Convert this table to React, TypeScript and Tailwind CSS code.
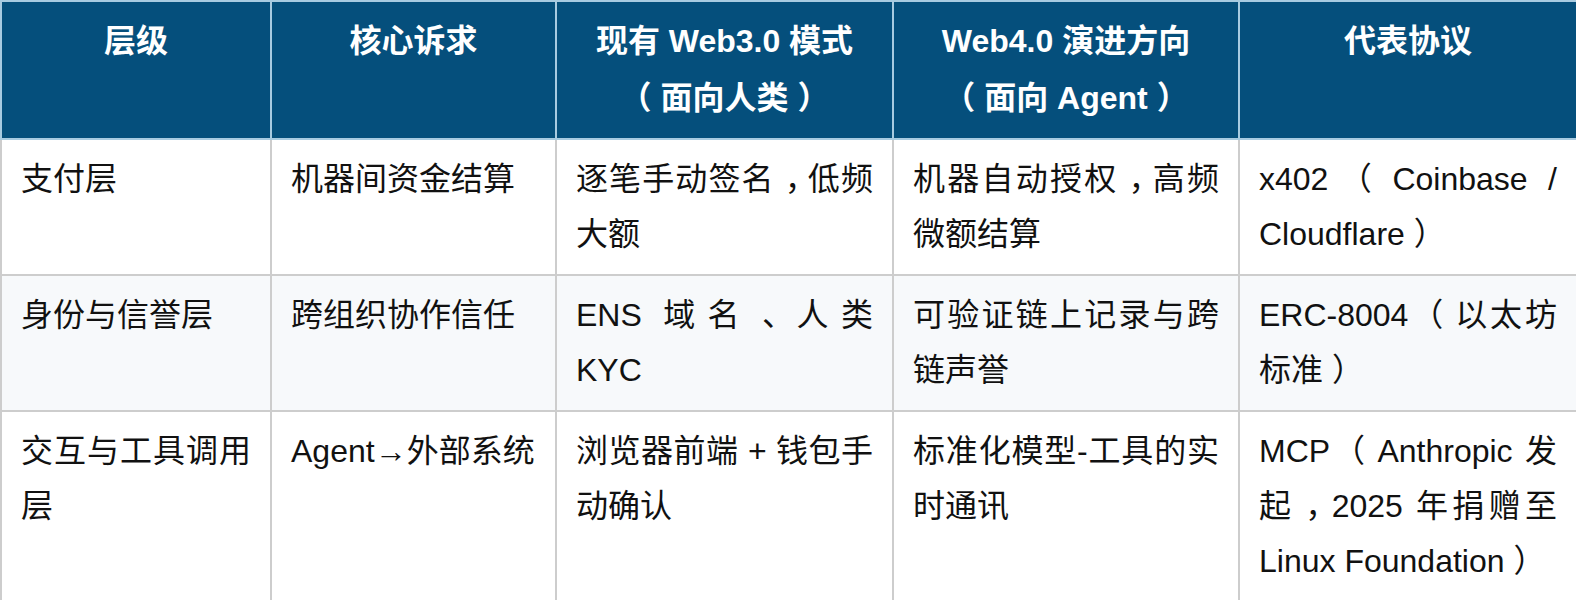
const headers = [
  ["层级"],
  ["核心诉求"],
  ["现有 Web3.0 模式", "（面向人类）"],
  ["Web4.0 演进方向", "（面向 Agent）"],
  ["代表协议"],
];

const rows = [
  [
    "支付层",
    "机器间资金结算",
    "逐笔手动签名，低频大额",
    "机器自动授权，高频微额结算",
    "x402 （Coinbase / Cloudflare）",
  ],
  [
    "身份与信誉层",
    "跨组织协作信任",
    "ENS 域名、人类 KYC",
    "可验证链上记录与跨链声誉",
    "ERC-8004 （以太坊标准）",
  ],
  [
    "交互与工具调用层",
    "Agent→外部系统",
    "浏览器前端 + 钱包手动确认",
    "标准化模型-工具的实时通讯",
    "MCP （Anthropic 发起，2025 年捐赠至 Linux Foundation）",
  ],
];

const widths = ["w-[270px]", "w-[285px]", "w-[337px]", "w-[346px]", "w-[338px]"];

// full-width punctuation sits centred in the em box in the reference font
function Text({ s }: { s: string }) {
  const parts = s.split(/([（），、])/);
  return (
    <>
      {parts.map((p, i) => {
        if (p === "（") return <span key={i} className="ml-[-9px] mr-[9px]">{p}</span>;
        if (p === "）") return <span key={i} className="ml-[9px] mr-[-9px]">{p}</span>;
        if (p === "，" || p === "、") return <span key={i} className="ml-[10px] mr-[-10px]">{p}</span>;
        return p;
      })}
    </>
  );
}

export default function App() {
  return (
    <div className="w-[1576px] h-[600px] overflow-hidden bg-white font-['Liberation_Sans','Noto_Sans_CJK_SC',sans-serif]">
      <table className="table-fixed w-[1576px] border-collapse">
        <colgroup>
          {widths.map((w, i) => (
            <col key={i} className={w} />
          ))}
        </colgroup>
        <thead>
          <tr className="bg-[#054f7c]">
            {headers.map((lines, i) => (
              <th
                key={i}
                className="border-2 border-[#a8cbe1] px-[19px] py-[11px] text-center align-top text-[32px] leading-[57px] font-bold text-white"
              >
                {lines.map((l, j) => (
                  <div key={j}>
                    <Text s={l} />
                  </div>
                ))}
              </th>
            ))}
          </tr>
        </thead>
        <tbody>
          {rows.map((row, r) => (
            <tr key={r} className={r === 1 ? "bg-[#f7f9fb]" : "bg-white"}>
              {row.map((cell, c) => (
                <td
                  key={c}
                  className="border-2 border-[#cdcdcd] px-[19px] py-3 align-top text-justify text-[32px] leading-[55px] text-[#111111]"
                >
                  <Text s={cell} />
                </td>
              ))}
            </tr>
          ))}
        </tbody>
      </table>
    </div>
  );
}
